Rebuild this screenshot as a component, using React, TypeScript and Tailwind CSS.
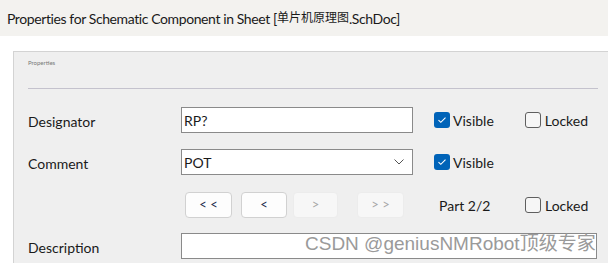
import React from "react";

const font = { fontFamily: 'Lato, "Noto Sans CJK SC", sans-serif' };

function Check({ checked }: { checked: boolean }) {
  if (checked) {
    return (
      <div className="w-[16px] h-[16px] rounded-[3px] bg-[#0063b8] flex items-center justify-center">
        <svg width="10" height="8" viewBox="0 0 10 8">
          <path d="M1.5 4.2 L3.8 6.3 L8.5 1.6" stroke="white" strokeWidth="1.1" fill="none" />
        </svg>
      </div>
    );
  }
  return <div className="w-[16px] h-[16px] rounded-[3px] border border-[#5f5f5f] bg-[#f6f6f6]" />;
}

function Btn({ label, disabled, w }: { label: string; disabled?: boolean; w: string }) {
  return (
    <div
      className={
        "h-[26px] rounded-[4px] border flex items-center justify-center text-[13px] whitespace-pre " +
        w +
        (disabled
          ? " bg-[#f7f7f7] border-[#ececec] text-[#a8a8a8]"
          : " bg-[#fdfdfd] border-[#d1d1d1] text-[#1a2a4a]")
      }
    >
      {label}
    </div>
  );
}

export default function App() {
  return (
    <div className="w-[608px] h-[263px] overflow-hidden bg-white relative" style={font}>
      <div className="h-[36px] bg-[#f3f2ef] flex items-center pl-[7px] text-[14px] tracking-[-0.4px] text-[#1a1a1a]">
        Properties for Schematic Component in Sheet [<span className="text-[12px] tracking-[0px]">单片机原理图</span>.SchDoc]
      </div>
      <div className="ml-[13px] mt-[15px] border-t border-l border-[#d3d3d3] bg-[#efefef] h-[220px] pl-[14px] pr-[10px] text-[14px] text-[#1a1a1a]">
        <div className="pt-[8px] h-[36px] text-[6px] text-[#777] leading-none">Properties</div>
        <div className="h-[1px] bg-[#c4c2cd]" />
        <div className="flex items-center mt-[18px] h-[26px]">
          <div className="w-[153px] pt-[2px]">Designator</div>
          <div className="w-[232px] h-[26px] bg-white border border-[#8a8a8a] flex items-center pl-[2px]">RP?</div>
          <div className="ml-[21px] flex items-center gap-[3px]">
            <Check checked />
            <span>Visible</span>
          </div>
          <div className="ml-[31px] flex items-center gap-[4px]">
            <Check checked={false} />
            <span>Locked</span>
          </div>
        </div>
        <div className="flex items-center mt-[16px] h-[26px]">
          <div className="w-[153px] pt-[2px]">Comment</div>
          <div className="w-[232px] h-[26px] bg-white border border-[#8a8a8a] flex items-center pl-[2px] pr-[8px] justify-between">
            <span>POT</span>
            <svg width="10" height="6" viewBox="0 0 10 6">
              <path d="M0.5 0.5 L5 5 L9.5 0.5" stroke="#555" strokeWidth="1" fill="none" />
            </svg>
          </div>
          <div className="ml-[21px] flex items-center gap-[3px]">
            <Check checked />
            <span>Visible</span>
          </div>
        </div>
        <div className="flex items-center mt-[17px] h-[26px]">
          <div className="w-[157px]" />
          <Btn label="< <" w="w-[47px]" />
          <div className="w-[9px]" />
          <Btn label="<" w="w-[46px]" />
          <div className="w-[6px]" />
          <Btn label=">" disabled w="w-[45px]" />
          <div className="w-[19px]" />
          <Btn label="> >" disabled w="w-[47px]" />
          <div className="ml-[35px] w-[86px]">Part 2/2</div>
          <div className="flex items-center gap-[4px]">
            <Check checked={false} />
            <span>Locked</span>
          </div>
        </div>
        <div className="flex items-center mt-[15px] h-[26px]">
          <div className="w-[153px] pt-[2px]">Description</div>
          <div className="w-[416px] h-[26px] bg-white border border-[#8a8a8a]" />
        </div>
      </div>
      <div
        className="absolute left-[305px] top-[234px] text-[19px] text-[#9a9a9a] leading-none whitespace-nowrap"
        style={{ fontFamily: '"Liberation Sans", "Noto Sans CJK SC", sans-serif' }}
      >
        CSDN @geniusNMRobot顶级专家
      </div>
    </div>
  );
}
